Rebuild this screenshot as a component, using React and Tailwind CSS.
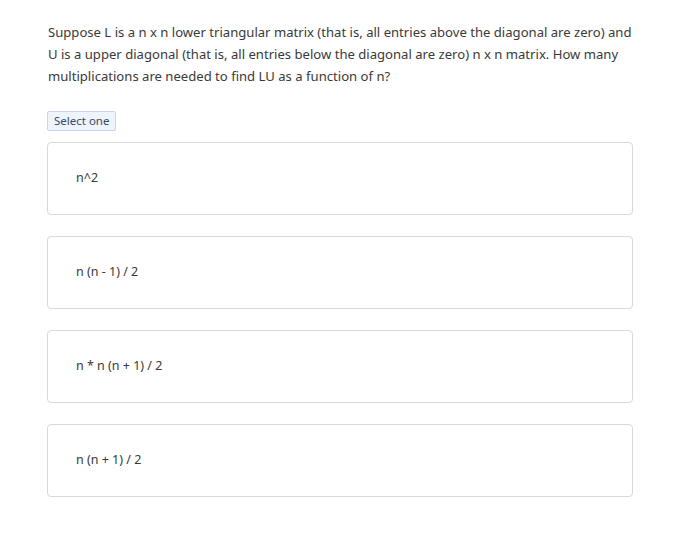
import React from "react";

const options = ["n^2", "n (n - 1) / 2", "n * n (n + 1) / 2", "n (n + 1) / 2"];

export default function App() {
  return (
    <div className="min-h-[538px] w-[680px] bg-white font-['Noto_Sans',sans-serif] text-[#3a3a3a]">
      <div className="pl-[48px] pr-[44px] pt-[21px]">
        <p className="text-[13.1px] leading-[22px]">
          Suppose L is a n x n lower triangular matrix (that is, all entries above the diagonal are zero) and U is a upper
          diagonal (that is, all entries below the diagonal are zero) n x n matrix. How many multiplications are needed
          to find LU as a function of n?
        </p>
      </div>
      <div className="pl-[47px] pr-[47px] pt-[20px]">
        <span className="inline-block rounded-[2px] border border-[#c7d5ee] bg-[#eef3fc] px-[6px] py-[1px] text-[11.5px] leading-[16px] text-[#3a4a66]">
          Select one
        </span>
        <div className="mt-[11px] flex flex-col gap-[21px]">
          {options.map((o) => (
            <div
              key={o}
              className="flex h-[73px] items-center rounded-[4px] border border-[#d9d9d9] pl-[28px] text-[12.5px]"
            >
              {o}
            </div>
          ))}
        </div>
      </div>
    </div>
  );
}
